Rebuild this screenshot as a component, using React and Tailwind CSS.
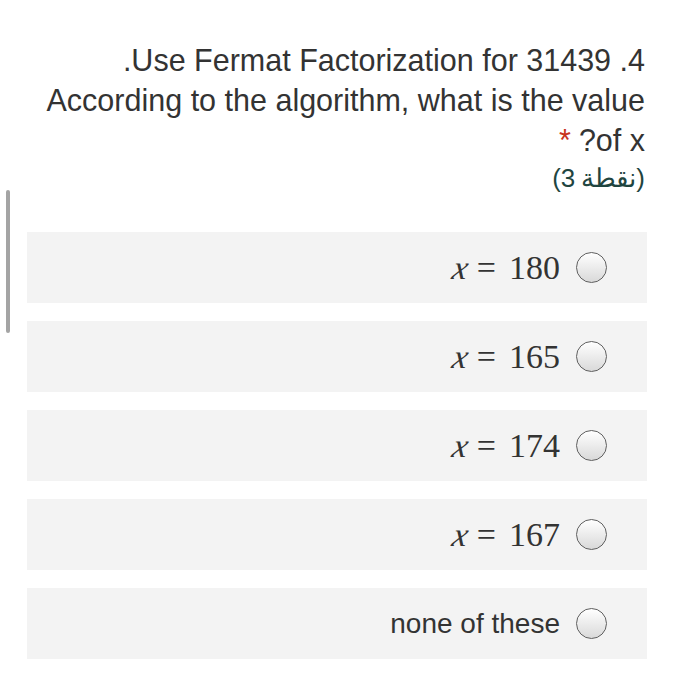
import React from "react";

const options = [
    { math: true, value: "180" },
    { math: true, value: "165" },
    { math: true, value: "174" },
    { math: true, value: "167" },
    { math: false, label: "none of these" },
];

const Radio = () => (
    <span className="inline-block w-[31px] h-[31px] rounded-full border-[1.5px] border-[#5f5f5f] bg-linear-to-b from-white to-[#d9d9d9] shrink-0"></span>
);

const App = () => {
    return (
        <div className="relative w-[675px] h-[700px] bg-white overflow-hidden">
            {/* scroll thumb */}
            <div className="absolute left-[6px] top-[190px] w-[4px] h-[143px] rounded-full bg-[#a4a4a4]"></div>

            <div className="pl-[27px] pr-[28px] pt-[40px]">
                {/* Question */}
                <div className="text-right pr-[2px] text-[30.5px] leading-[40px] text-[#333333] font-['Liberation_Sans',Arial,sans-serif]">
                    <div>.Use Fermat Factorization for 31439 .4</div>
                    <div>According to the algorithm, what is the value</div>
                    <div>
                        <span className="text-[#c8341d] mr-[8px]">*</span>?of x
                    </div>
                    <div dir="ltr" className="flex justify-end items-baseline text-[26px] leading-[34px] mt-[1px] text-[#1f4540] font-['Liberation_Sans','Noto_Sans',sans-serif]">
                        <span>(3</span>
                        <span className="ml-[6px]" dir="rtl">نقطة</span>
                        <span>)</span>
                    </div>
                </div>

                {/* Options */}
                <div className="mt-[37px] flex flex-col gap-[18px]">
                    {options.map((opt, i) => (
                        <div key={i} className="h-[71px] bg-[#f3f3f3] flex items-center justify-end pr-[40px] gap-[16px]">
                            {opt.math ? (
                                <span className="flex items-baseline text-[34px] leading-none text-[#333333] font-['Liberation_Serif','Times_New_Roman',serif]">
                                    <span className="inline-block italic -skew-x-12">x</span>
                                    <span className="ml-[9px] mr-[13px]">=</span>
                                    <span>{opt.value}</span>
                                </span>
                            ) : (
                                <span className="text-[28px] text-[#333333] font-['Liberation_Sans',Arial,sans-serif]">{opt.label}</span>
                            )}
                            <Radio />
                        </div>
                    ))}
                </div>
            </div>
        </div>
    );
};

export default App;
